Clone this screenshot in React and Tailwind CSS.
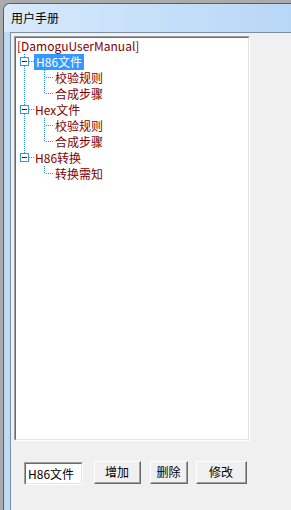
import React from "react";

const FONT = { fontFamily: '"Noto Sans CJK SC", "Liberation Sans", sans-serif' };
const DOT = "#2f8fe8";

function Level1Cell({ last }) {
  return (
    <svg width="18" height="16" className="block shrink-0" shapeRendering="crispEdges">
      <line x1="8.5" y1="0" x2="8.5" y2="3" stroke={DOT} strokeDasharray="1 1" />
      {!last && <line x1="8.5" y1="12" x2="8.5" y2="16" stroke={DOT} strokeDasharray="1 1" />}
      <line x1="13" y1="7.5" x2="18" y2="7.5" stroke={DOT} strokeDasharray="1 1" />
      <rect x="4.5" y="3.5" width="8" height="8" fill="#ffffff" stroke="#3d97de" />
      <line x1="6" y1="7.5" x2="11" y2="7.5" stroke="#800000" />
    </svg>
  );
}

function Level2Cells({ parentLast, last }) {
  return (
    <>
      <svg width="20" height="16" className="block shrink-0" shapeRendering="crispEdges">
        {!parentLast && <line x1="8.5" y1="0" x2="8.5" y2="16" stroke={DOT} strokeDasharray="1 1" />}
      </svg>
      <svg width="18" height="16" className="block shrink-0" shapeRendering="crispEdges">
        <line x1="8.5" y1="0" x2="8.5" y2={last ? 8 : 16} stroke={DOT} strokeDasharray="1 1" />
        <line x1="10" y1="7.5" x2="18" y2="7.5" stroke={DOT} strokeDasharray="1 1" />
      </svg>
    </>
  );
}

function Label({ children, selected }) {
  return (
    <span
      className={
        selected
          ? "h-[16px] leading-[16px] px-[2px] bg-[#3399ff] text-white whitespace-nowrap"
          : "h-[16px] leading-[16px] px-[1px] text-[#800000] whitespace-nowrap"
      }
    >
      {children}
    </span>
  );
}

const rows = [
  { level: 1, label: "H86文件", selected: true, last: false },
  { level: 2, label: "校验规则", parentLast: false, last: false },
  { level: 2, label: "合成步骤", parentLast: false, last: true },
  { level: 1, label: "Hex文件", last: false },
  { level: 2, label: "校验规则", parentLast: false, last: false },
  { level: 2, label: "合成步骤", parentLast: false, last: true },
  { level: 1, label: "H86转换", last: true },
  { level: 2, label: "转换需知", parentLast: true, last: true },
];

function Button({ w, children }) {
  return (
    <div className={`${w} h-[23px] border-t border-l border-white border-b border-r border-b-[#696969] border-r-[#696969]`}>
      <div className="w-full h-full border-b border-r border-[#a0a0a0] bg-[#f0f0f0] flex items-center justify-center text-[12px] text-black leading-none pb-[1px]">
        {children}
      </div>
    </div>
  );
}

export default function App() {
  return (
    <div className="w-[291px] h-[510px] bg-[#ababab] pt-[3px] pl-[3px] flex overflow-hidden text-[12px]" style={FONT}>
      <div className="flex-1 flex flex-col rounded-tl-[7px] border-l border-t border-[#4f5f70] bg-[#bcd9f5]">
        <div className="h-[28px] shrink-0 flex items-center pl-[7px] text-[12px] text-black rounded-tl-[6px] bg-gradient-to-r from-[#d8eafc] via-[#c6e0f9] to-[#b8d7f6]">
          用户手册
        </div>
        <div className="flex-1 ml-[6px] border-l border-t border-[#7d8fa2] bg-[#f0f0f0] pl-[3px] pt-[3px] flex flex-col">
          <div className="w-[236px] h-[405px] border-t border-l border-[#a0a0a0] border-b border-r border-b-white border-r-white">
            <div className="w-full h-full border-t border-l border-[#696969] border-b border-r border-b-[#e3e3e3] border-r-[#e3e3e3] bg-white flex flex-col">
              <div className="flex h-[16px]">
                <Label>[DamoguUserManual]</Label>
              </div>
              {rows.map((r, i) => (
                <div key={i} className="flex h-[16px]">
                  {r.level === 1 ? (
                    <Level1Cell last={r.last} />
                  ) : (
                    <Level2Cells parentLast={r.parentLast} last={r.last} />
                  )}
                  <Label selected={r.selected}>{r.label}</Label>
                </div>
              ))}
            </div>
          </div>
          <div className="flex items-start mt-[20px] pl-[10px]">
            <div className="mt-[1px] w-[59px] h-[23px] border-t border-l border-[#a0a0a0] border-b border-r border-b-white border-r-white">
              <div className="w-full h-full border-t border-l border-[#696969] border-b border-r border-b-[#e3e3e3] border-r-[#e3e3e3] bg-white flex items-center pl-[2px] text-[12px] text-black leading-none">
                H86文件
              </div>
            </div>
            <div className="ml-[11px]">
              <Button w="w-[47px]">增加</Button>
            </div>
            <div className="ml-[9px]">
              <Button w="w-[38px]">删除</Button>
            </div>
            <div className="ml-[8px]">
              <Button w="w-[51px]">修改</Button>
            </div>
          </div>
        </div>
      </div>
    </div>
  );
}
